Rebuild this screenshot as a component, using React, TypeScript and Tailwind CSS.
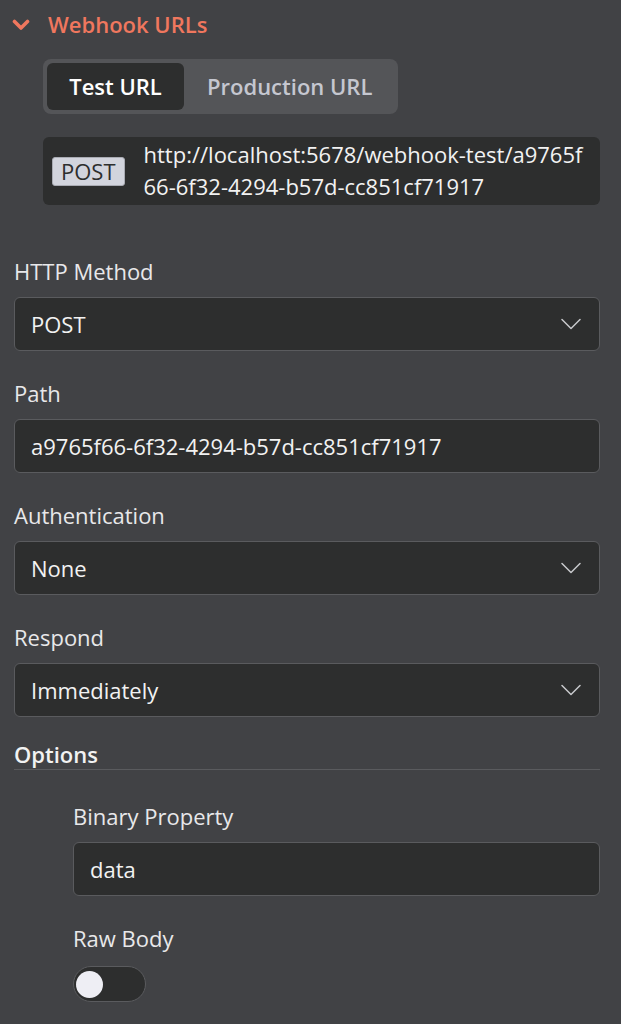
import React from 'react';

const Chevron: React.FC = () => (
  <svg className="w-[20px] h-[12px] text-[#c8c9cc]" viewBox="0 0 20 12" fill="none" stroke="currentColor" strokeWidth="1.5">
    <path d="M1 1.5l9 9 9-9" strokeLinecap="round" strokeLinejoin="round" />
  </svg>
);

const Label: React.FC<{ children: React.ReactNode }> = ({ children }) => (
  <div className="h-[24px] leading-[22px] text-[22px] text-[#e8e8ea]">{children}</div>
);

const Select: React.FC<{ value: string }> = ({ value }) => (
  <div className="h-[54px] flex items-center justify-between pl-[16px] pr-[18px] bg-[#2d2e2e] border border-[#5a5b5e] rounded-[6px]">
    <span className="text-[22px] text-[#f2f2f2]">{value}</span>
    <Chevron />
  </div>
);

const Input: React.FC<{ value: string }> = ({ value }) => (
  <div className="h-[54px] flex items-center pl-[16px] bg-[#2d2e2e] border border-[#5a5b5e] rounded-[6px]">
    <span className="text-[22px] text-[#f2f2f2]">{value}</span>
  </div>
);

const Field: React.FC<{ label: string; children: React.ReactNode }> = ({ label, children }) => (
  <div className="flex flex-col gap-[13px]">
    <Label>{label}</Label>
    {children}
  </div>
);

export default function App() {
  return (
    <div className="min-h-screen w-full bg-[#414245] pl-[14px] pr-[21px] font-['Open_Sans',sans-serif]">
      {/* Webhook URLs header */}
      <div className="flex items-center h-[50px] -ml-[2px]">
        <svg className="w-[18px] h-[12px] text-[#f0775e]" viewBox="0 0 18 12" fill="none" stroke="currentColor" strokeWidth="3.6">
          <path d="M2.5 2.5l6.5 6.5 6.5-6.5" strokeLinecap="round" strokeLinejoin="round" />
        </svg>
        <span className="ml-[18px] -mt-[2px] text-[22px] font-semibold text-[#f0775e]">Webhook URLs</span>
      </div>

      <div className="ml-[29px]">
        {/* URL tabs */}
        <div className="mt-[9px] inline-flex p-[4px] bg-[#545558] rounded-[8px]">
          <div className="w-[137px] h-[47px] flex items-center justify-center bg-[#2d2e2e] rounded-[6px] text-[22px] font-semibold text-white">
            Test URL
          </div>
          <div className="h-[47px] flex items-center pl-[23px] pr-[22px] text-[22px] font-semibold text-[#c5c7d0]">
            Production URL
          </div>
        </div>

        {/* URL box */}
        <div className="mt-[23px] h-[68px] flex items-center pl-[9px] pr-[8px] bg-[#2d2e2e] rounded-[6px]">
          <span className="shrink-0 h-[29px] px-[8px] flex items-center bg-[#d2d4dd] border border-[#a9abb3] rounded-[3px] text-[22px] text-[#2d2e2e]">
            POST
          </span>
          <span className="ml-[19px] -mt-[2px] text-[22px] leading-[32px] text-[#f2f2f2] break-all">
            http://localhost:5678/webhook-test/a9765f66-6f32-4294-b57d-cc851cf71917
          </span>
        </div>
      </div>

      {/* Fields */}
      <div className="mt-[55px] flex flex-col gap-[31px]">
        <Field label="HTTP Method">
          <Select value="POST" />
        </Field>
        <Field label="Path">
          <Input value="a9765f66-6f32-4294-b57d-cc851cf71917" />
        </Field>
        <Field label="Authentication">
          <Select value="None" />
        </Field>
        <Field label="Respond">
          <Select value="Immediately" />
        </Field>
      </div>

      {/* Options */}
      <div className="mt-[25px] pb-[3px] border-b border-[#5a5b5e] h-[28px] leading-[24px] text-[22px] font-semibold text-[#f2f2f2]">
        Options
      </div>

      <div className="ml-[59px] mt-[35px] flex flex-col gap-[31px]">
        <Field label="Binary Property">
          <Input value="data" />
        </Field>
        <div className="flex flex-col gap-[15px]">
          <Label>Raw Body</Label>
          <div className="w-[73px] h-[36px] flex items-center px-[2px] bg-[#2d2e2e] border border-[#5a5b5e] rounded-full">
            <div className="w-[27px] h-[27px] rounded-full bg-[#eeeef4]" />
          </div>
        </div>
      </div>
    </div>
  );
}
